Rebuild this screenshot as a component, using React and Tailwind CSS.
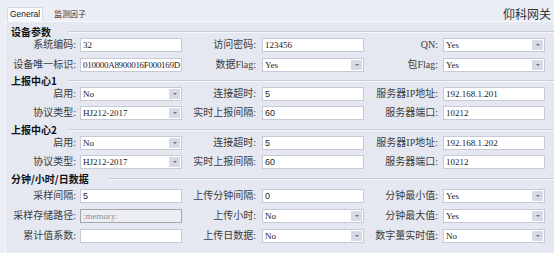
const serif = "font-['Liberation_Serif','Noto_Sans_CJK_SC',serif]";
const cjk = "font-['Noto_Sans_CJK_SC','Liberation_Sans',sans-serif]";

function TextBox({ value, sans, disabled, tight }) {
  return (
    <div
      className={`h-[14px] w-[102px] border flex items-center overflow-hidden whitespace-nowrap pl-[2px] text-[9px] leading-none ${
        disabled
          ? "bg-[#eceef2] border-[#a3a7b0] text-[#8a8d94]"
          : "bg-white border-[#c6cad6] text-[#222]"
      } ${sans ? "font-['Liberation_Sans',sans-serif]" : serif} ${tight ? "tracking-[-0.3px]" : ""}`}
    >
      {value}
    </div>
  );
}

function Combo({ value }) {
  return (
    <div className="h-[14px] w-[102px] border border-[#c6cad6] bg-white flex items-stretch">
      <div className={`flex-1 flex items-center pl-[2px] text-[9px] leading-none text-[#222] ${serif}`}>
        {value}
      </div>
      <div className="w-[11px] m-[1px] bg-[#d5dae6] flex items-center justify-center">
        <div className="w-0 h-0 border-l-[2px] border-r-[2px] border-t-[2px] border-l-transparent border-r-transparent border-t-[#6b7080]" />
      </div>
    </div>
  );
}

function Cell({ label, lw, gap, children }) {
  return (
    <div className="flex items-center">
      <div
        className={`${lw} ${gap} text-right text-[10px] leading-none text-[#3c3c3c] whitespace-nowrap ${serif}`}
      >
        {label}
      </div>
      {children}
    </div>
  );
}

function Row({ cells, className = "" }) {
  return (
    <div className={`flex h-[14px] ${className}`}>
      <Cell label={cells[0][0]} lw="w-[70px]" gap="mr-[4px]">
        {cells[0][1]}
      </Cell>
      <Cell label={cells[1][0]} lw="w-[74px]" gap="mr-[6px]">
        {cells[1][1]}
      </Cell>
      <Cell label={cells[2][0]} lw="w-[74px]" gap="mr-[5px]">
        {cells[2][1]}
      </Cell>
    </div>
  );
}

function Header({ title, lineStart, className = "" }) {
  return (
    <div className={`flex items-center h-[12px] ${className}`}>
      <div className={`${lineStart} pl-[5px] text-[10px] font-bold leading-none text-[#111] whitespace-nowrap ${cjk}`}>
        {title}
      </div>
      <div className="flex-1 h-[2px] border-t border-[#c8ccd8] border-b border-b-[#f7f8fb]" />
    </div>
  );
}

export default function App() {
  return (
    <div className="w-[554px] h-[253px] bg-[#eceef5] flex flex-col overflow-hidden">
      {/* tab strip */}
      <div className="h-[21px] flex items-end relative">
        <div className="ml-[7px] h-[14px] w-[36px] bg-[#fbfbfd] border-t border-l border-r border-[#d6d9e2] flex items-center justify-center text-[8.5px] leading-none text-[#222] font-['Liberation_Sans',sans-serif]">
          General
        </div>
        <div className={`ml-[11px] h-[14px] flex items-center text-[8px] leading-none text-[#333] ${cjk}`}>
          监测因子
        </div>
        <div className={`ml-auto mr-[3px] self-center mt-[6px] text-[12px] leading-none text-[#333] ${cjk}`}>
          仰科网关
        </div>
      </div>

      {/* panel */}
      <div className="flex-1 ml-[5px] bg-[#e5e8f0] border-t border-l border-[#f8f9fc] flex flex-col">
        <Header title="设备参数" lineStart="w-[63px]" className="mt-[4px]" />
        <Row
          cells={[
            ["系统编码:", <TextBox value="32" />],
            ["访问密码:", <TextBox value="123456" />],
            ["QN:", <Combo value="Yes" />],
          ]}
        />
        <Row
          className="mt-[6px]"
          cells={[
            ["设备唯一标识:", <TextBox tight value="010000A8900016F000169D" />],
            ["数据Flag:", <Combo value="Yes" />],
            ["包Flag:", <Combo value="Yes" />],
          ]}
        />

        <Header title="上报中心1" lineStart="w-[63px]" className="mt-[3px]" />
        <Row
          cells={[
            ["启用:", <Combo value="No" />],
            ["连接超时:", <TextBox sans value="5" />],
            ["服务器IP地址:", <TextBox value="192.168.1.201" />],
          ]}
        />
        <Row
          className="mt-[5px]"
          cells={[
            ["协议类型:", <Combo value="HJ212-2017" />],
            ["实时上报间隔:", <TextBox sans value="60" />],
            ["服务器端口:", <TextBox value="10212" />],
          ]}
        />

        <Header title="上报中心2" lineStart="w-[63px]" className="mt-[4px]" />
        <Row
          cells={[
            ["启用:", <Combo value="No" />],
            ["连接超时:", <TextBox sans value="5" />],
            ["服务器IP地址:", <TextBox value="192.168.1.202" />],
          ]}
        />
        <Row
          className="mt-[5px]"
          cells={[
            ["协议类型:", <Combo value="HJ212-2017" />],
            ["实时上报间隔:", <TextBox sans value="60" />],
            ["服务器端口:", <TextBox value="10212" />],
          ]}
        />

        <Header title="分钟/小时/日数据" lineStart="w-[102px]" className="mt-[4px]" />
        <Row
          className="mt-[4px]"
          cells={[
            ["采样间隔:", <TextBox sans value="5" />],
            ["上传分钟间隔:", <TextBox sans value="0" />],
            ["分钟最小值:", <Combo value="Yes" />],
          ]}
        />
        <Row
          className="mt-[6px]"
          cells={[
            ["采样存储路径:", <TextBox disabled value=":memory:" />],
            ["上传小时:", <Combo value="No" />],
            ["分钟最大值:", <Combo value="Yes" />],
          ]}
        />
        <Row
          className="mt-[6px]"
          cells={[
            ["累计值系数:", <TextBox value="" />],
            ["上传日数据:", <Combo value="No" />],
            ["数字量实时值:", <Combo value="No" />],
          ]}
        />
      </div>
    </div>
  );
}
